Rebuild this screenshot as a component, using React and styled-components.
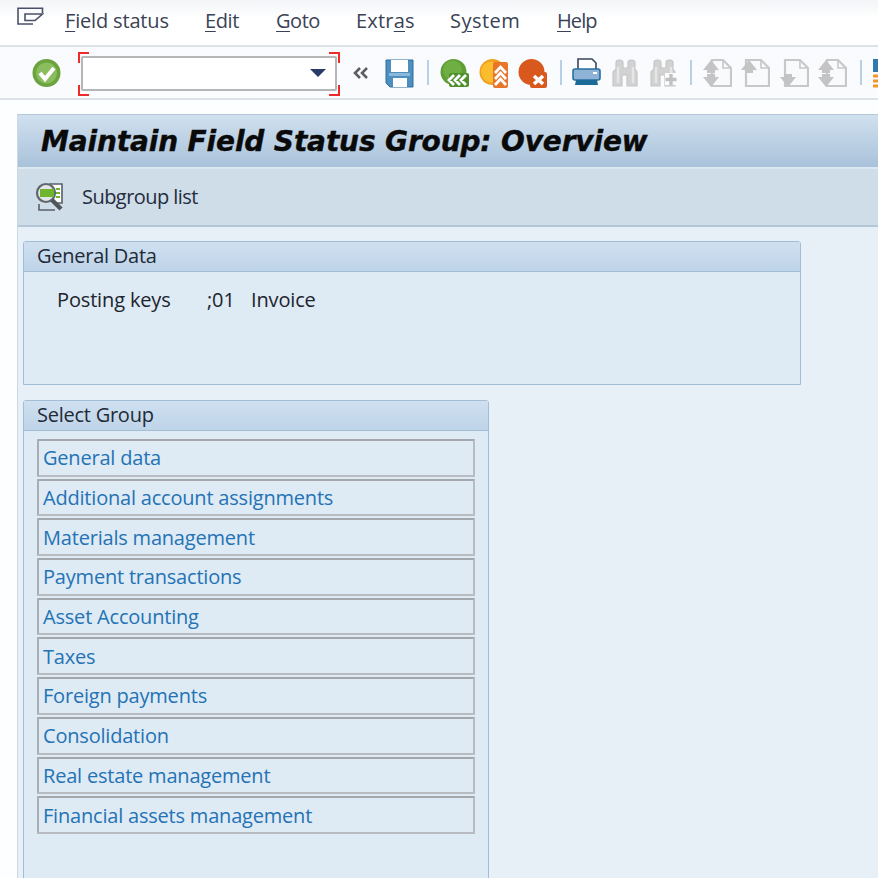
import styled, { createGlobalStyle } from "styled-components";

const GlobalStyle = createGlobalStyle`
    html, body {
        margin: 0;
        padding: 0;
        background: #fff;
    }

    body {
        font-family: "Open Sans", "Noto Sans", sans-serif;
    }
`

const Page = styled.div`
    width: 878px;
    height: 878px;
    overflow: hidden;
    display: flex;
    flex-direction: column;
    background: #fdfeff;
`

const MenuBar = styled.div`
    height: 45px;
    flex-shrink: 0;
    display: flex;
    align-items: flex-start;
    padding-left: 17px;
    background: linear-gradient(#f3f5f8, #ffffff 40%);
    border-bottom: 2px solid #dde2e8;
`

const MenuList = styled.div`
    display: flex;
    margin-left: 21px;
    padding-top: 7px;
`

const MenuItem = styled.span`
    width: ${p => p.$width}px;
    font-size: 20px;
    line-height: 27px;
    color: #3a4256;
    letter-spacing: ${p => p.$spacing}px;
    white-space: nowrap;

    u {
        text-underline-offset: 3px;
        text-decoration-thickness: 1px;
    }
`

const ToolBar = styled.div`
    height: 51px;
    flex-shrink: 0;
    display: flex;
    align-items: center;
    padding-left: 32px;
    overflow: hidden;
    background: linear-gradient(#f8fafd, #fbfcfe);
    border-bottom: 2px solid #dde2e8;
`

const CommandBox = styled.div`
    position: relative;
    flex-shrink: 0;
    width: 262px;
    height: 44px;
    margin: 2px 13px 0 17px;
    display: flex;
    align-items: center;
    justify-content: center;
`

const CommandInput = styled.div`
    width: 256px;
    height: 35px;
    box-sizing: border-box;
    border: 2px solid #b4b6b8;
    border-radius: 2px;
    background: #fff;
    display: flex;
    align-items: center;
    justify-content: flex-end;
    padding: 0 9px 2px 0;

    &::after {
        content: "";
        width: 0;
        height: 0;
        border-left: 8px solid transparent;
        border-right: 8px solid transparent;
        border-top: 8px solid #2a3a6a;
    }
`

const Corner = styled.span`
    position: absolute;
    width: 9px;
    height: 9px;
    border: 0 solid #ee2b2b;
    ${p => p.$top ? "top: 0; border-top-width: 2px;" : "bottom: 0; border-bottom-width: 2px;"}
    ${p => p.$left ? "left: 0; border-left-width: 2px;" : "right: 0; border-right-width: 2px;"}
`

const ToolGroup = styled.div`
    display: flex;
    align-items: center;
    flex-shrink: 0;
    gap: ${p => p.$gap || 10}px;
    margin-left: ${p => p.$offset || 0}px;
`

const Separator = styled.span`
    flex-shrink: 0;
    width: 2px;
    height: 25px;
    margin: 0 10.5px 0 13px;
    background: #b7d0e6;
`

const ToolIcon = styled.svg`
    display: block;
    flex-shrink: 0;
    width: ${p => p.$w || 29}px;
    height: 30px;
`

const Screen = styled.div`
    flex: 1;
    display: flex;
    flex-direction: column;
    margin: 14px 0 0 17px;
    border-left: 1px solid #ccd8e3;
    background: #e8f0f7;
`

const TitleBar = styled.div`
    height: 52px;
    flex-shrink: 0;
    display: flex;
    align-items: center;
    padding-left: 23px;
    border-top: 1px solid #b5c8da;
    background: linear-gradient(#d0e0ef, #a9c2da);
`

const Title = styled.h1`
    margin: 0;
    font-family: "DejaVu Sans", sans-serif;
    font-size: 28px;
    font-weight: 700;
    font-style: italic;
    letter-spacing: -0.14px;
    -webkit-text-stroke: 0.4px #0a0a0a;
    color: #0a0a0a;
    white-space: nowrap;
`

const ActionBar = styled.div`
    height: 56px;
    flex-shrink: 0;
    display: flex;
    align-items: center;
    gap: 17px;
    padding-left: 17px;
    background: #cfdde9;
    border-top: 2px solid #dce7f0;
    border-bottom: 2px solid #b3c5d6;
    font-size: 20px;
    letter-spacing: -0.55px;
    color: #252c3c;
`

const SubgroupLabel = styled.span`
    position: relative;
    top: -1px;
`

const Content = styled.div`
    flex: 1;
    display: flex;
    flex-direction: column;
    gap: 15px;
    padding: 14px 0 0 5px;
`

const Panel = styled.section`
    width: ${p => p.$width}px;
    height: ${p => p.$height}px;
    flex-shrink: 0;
    box-sizing: border-box;
    border: 1px solid #a3bdd6;
    border-radius: 3px 3px 0 0;
    background: #deeaf4;
`

const PanelHead = styled.div`
    height: 30px;
    box-sizing: border-box;
    padding-left: 13px;
    font-size: 20px;
    line-height: 28px;
    letter-spacing: -0.25px;
    color: #222a36;
    background: linear-gradient(#cfe0f0, #bed4e9);
    border-bottom: 1px solid #a3bdd6;
`

const FieldRow = styled.div`
    display: flex;
    padding: 14px 0 0 33px;
    font-size: 20px;
    line-height: 27px;
    letter-spacing: -0.15px;
    color: #20242c;
`

const FieldLabel = styled.span`
    width: 150px;
`

const FieldKey = styled.span`
    width: 44px;
`

const GroupList = styled.div`
    display: grid;
    grid-auto-rows: 37.7px;
    row-gap: 2px;
    padding: 8px 13px 0 13px;
`

const GroupButton = styled.button`
    box-sizing: border-box;
    margin: 0;
    padding: 0 0 0 4px;
    text-align: left;
    font: inherit;
    font-size: 20px;
    letter-spacing: -0.2px;
    color: #2473b5;
    background: #deeaf4;
    border: 2px solid #b8bbbf;
    border-top-color: #a4a8ac;
    border-left-color: #aaaeb2;
    border-radius: 1px;
`

const menus = [
    { before: "", key: "F", after: "ield status", width: 140, spacing: -0.17 },
    { before: "", key: "E", after: "dit", width: 71, spacing: -0.4 },
    { before: "", key: "G", after: "oto", width: 80, spacing: -0.45 },
    { before: "Extr", key: "a", after: "s", width: 94, spacing: 0.2 },
    { before: "S", key: "y", after: "stem", width: 107, spacing: 0.45 },
    { before: "", key: "H", after: "elp", width: 50, spacing: -0.9 },
]

const groups = [
    "General data",
    "Additional account assignments",
    "Materials management",
    "Payment transactions",
    "Asset Accounting",
    "Taxes",
    "Foreign payments",
    "Consolidation",
    "Real estate management",
    "Financial assets management",
]

function MenuIcon() {
    return (
        <svg width="27" height="18" viewBox="0 0 27 18" style={{ marginTop: 7 }} fill="none" stroke="#4a5068" strokeWidth="1.6">
            <path d="M25.5 6V1.3H1V17H16" />
            <path d="M8 7H25.5L18 13.5H8Z" />
        </svg>
    )
}

function EnterIcon() {
    return (
        <ToolIcon viewBox="0 0 29 30">
            <circle cx="14.5" cy="15" r="14" fill="#6ba33f" />
            <circle cx="14.5" cy="15" r="10.5" fill="#8abd5e" />
            <path d="M8 15l5 6 9-11" fill="none" stroke="#fff" strokeWidth="4" />
        </ToolIcon>
    )
}

function CollapseIcon() {
    return (
        <ToolIcon $w={16} viewBox="0 0 16 30">
            <path d="M7 10l-5 5 5 5M14 10l-5 5 5 5" fill="none" stroke="#5c5f60" strokeWidth="2.6" />
        </ToolIcon>
    )
}

function SaveIcon() {
    return (
        <ToolIcon viewBox="0 0 29 30">
            <path d="M1 2h27v27H5l-4-4z" fill="#4f8fc0" stroke="#2f6c9e" />
            <rect x="6" y="2" width="17" height="12" fill="#fff" />
            <rect x="8" y="20" width="14" height="9" fill="#fff" />
            <rect x="4" y="15" width="21" height="3" fill="#8ab8da" />
        </ToolIcon>
    )
}

function BackIcon() {
    return (
        <ToolIcon viewBox="0 0 29 30">
            <circle cx="13.5" cy="14" r="13" fill="#5f9e36" />
            <circle cx="12.5" cy="12" r="9.5" fill="#6fae42" />
            <rect x="9" y="15" width="20" height="14" rx="2" fill="#4e8f2c" />
            <path d="M14 17l-5 5 5 5M20 17l-5 5 5 5M26 17l-5 5 5 5" fill="none" stroke="#fff" strokeWidth="2.8" />
        </ToolIcon>
    )
}

function ExitIcon() {
    return (
        <ToolIcon viewBox="0 0 29 30">
            <circle cx="13.5" cy="14" r="13" fill="#f0a020" />
            <circle cx="12.5" cy="14" r="10.5" fill="#fbbd2e" />
            <rect x="14" y="4" width="15" height="26" rx="2" fill="#e8752a" />
            <path d="M16 15l5.5-6 5.5 6M16 21l5.5-6 5.5 6M16 27l5.5-6 5.5 6" fill="none" stroke="#fff" strokeWidth="2.8" />
        </ToolIcon>
    )
}

function CancelIcon() {
    return (
        <ToolIcon viewBox="0 0 29 30">
            <circle cx="13.5" cy="14" r="13" fill="#d9581e" />
            <rect x="12" y="14" width="17" height="16" rx="2" fill="#d9581e" />
            <path d="M16 18l9 8M25 18l-9 8" fill="none" stroke="#fff" strokeWidth="3.6" />
        </ToolIcon>
    )
}

function PrintIcon() {
    return (
        <ToolIcon viewBox="0 0 29 30">
            <path d="M6 11V1h14l4 4v6" fill="#fff" stroke="#3a4658" strokeWidth="1.6" />
            <rect x="1" y="11" width="27" height="11" rx="2" fill="#8fb3d6" stroke="#2a6f9e" strokeWidth="1.6" />
            <rect x="21" y="14" width="4" height="2" fill="#fff" />
            <path d="M4 22h21l1 5H3z" fill="#1b6a98" />
        </ToolIcon>
    )
}

function FindIcon({ plus }) {
    return (
        <ToolIcon $w={27} viewBox="0 0 27 30">
            <path d="M4 5q0-3 3-3h1q3 0 3 3v5h5V5q0-3 3-3h1q3 0 3 3v6l2 3v14h-10V17h-5v11H1V14l3-3z" fill="#d2d2d2" stroke="#c6c6c6" strokeWidth="1.2" />
            <path d="M6 9v16M21 9v16" stroke="#e6e6e6" strokeWidth="2.4" />
            {plus && (
                <>
                    <rect x="15" y="15" width="12" height="12" fill="#fbfcfe" />
                    <path d="M21 16v11M15.5 21.5h11" stroke="#c0c0c0" strokeWidth="3.4" />
                </>
            )}
        </ToolIcon>
    )
}

function PageIcon({ up, down, left = 9 }) {
    return (
        <ToolIcon viewBox="0 0 29 30">
            <path d={`M${left} 2H20l8 8V28H${left}z`} fill="#f8fafc" stroke="#c8c8c8" strokeWidth="2.2" />
            <path d="M20 2v8h8" fill="none" stroke="#c8c8c8" strokeWidth="1.6" />
            {up && <path d="M0 12L8 2l8 10h-4v3H4v-3z" fill="#c4c4c4" />}
            {down && <path d="M0 19l8 10 8-10h-4v-3H4v3z" fill="#c4c4c4" />}
        </ToolIcon>
    )
}

function PartialIcon() {
    return (
        <ToolIcon $w={10} viewBox="0 0 10 30">
            <rect x="0" y="1" width="10" height="13" fill="#2f78b0" />
            <path d="M0 18h10M0 23h10M0 28h10" stroke="#f0962a" strokeWidth="3" />
        </ToolIcon>
    )
}

function SubgroupIcon() {
    return (
        <svg width="30" height="30" viewBox="0 0 30 30">
            <path d="M14 2H27V21H20" fill="#fff" stroke="#5a6068" strokeWidth="1.6" />
            <circle cx="11" cy="11" r="9" fill="#e2e6e8" stroke="#5f666c" strokeWidth="2.2" />
            <rect x="5" y="7" width="14" height="8" fill="#6fb52d" />
            <path d="M21 7h4M21 11h4M21 15h4" stroke="#6fb52d" strokeWidth="2" />
            <path d="M17 18l9 9" stroke="#50565c" strokeWidth="4.4" />
            <path d="M4 22v6h16" fill="none" stroke="#5a6068" strokeWidth="1.6" />
        </svg>
    )
}

export default function App() {
    return (
        <Page>
            <GlobalStyle />
            <MenuBar>
                <MenuIcon />
                <MenuList>
                    {menus.map(menu => (
                        <MenuItem key={menu.key} $width={menu.width} $spacing={menu.spacing}>
                            {menu.before}<u>{menu.key}</u>{menu.after}
                        </MenuItem>
                    ))}
                </MenuList>
            </MenuBar>

            <ToolBar>
                <EnterIcon />
                <CommandBox>
                    <Corner $top $left />
                    <Corner $top />
                    <Corner $left />
                    <Corner />
                    <CommandInput />
                </CommandBox>
                <CollapseIcon />
                <ToolGroup $offset={16}>
                    <SaveIcon />
                </ToolGroup>
                <Separator />
                <ToolGroup>
                    <BackIcon />
                    <ExitIcon />
                    <CancelIcon />
                </ToolGroup>
                <Separator />
                <ToolGroup $gap={11}>
                    <PrintIcon />
                    <FindIcon />
                    <FindIcon plus />
                </ToolGroup>
                <Separator />
                <ToolGroup $gap={9.5}>
                    <PageIcon up down />
                    <PageIcon up left={5} />
                    <PageIcon down left={5} />
                    <PageIcon up down />
                </ToolGroup>
                <Separator />
                <PartialIcon />
            </ToolBar>

            <Screen>
                <TitleBar>
                    <Title>Maintain Field Status Group: Overview</Title>
                </TitleBar>
                <ActionBar>
                    <SubgroupIcon />
                    <SubgroupLabel>Subgroup list</SubgroupLabel>
                </ActionBar>
                <Content>
                    <Panel $width={778} $height={144}>
                        <PanelHead>General Data</PanelHead>
                        <FieldRow>
                            <FieldLabel>Posting keys</FieldLabel>
                            <FieldKey>;01</FieldKey>
                            <span>Invoice</span>
                        </FieldRow>
                    </Panel>
                    <Panel $width={466} $height={500}>
                        <PanelHead>Select Group</PanelHead>
                        <GroupList>
                            {groups.map(name => (
                                <GroupButton key={name}>{name}</GroupButton>
                            ))}
                        </GroupList>
                    </Panel>
                </Content>
            </Screen>
        </Page>
    )
}
